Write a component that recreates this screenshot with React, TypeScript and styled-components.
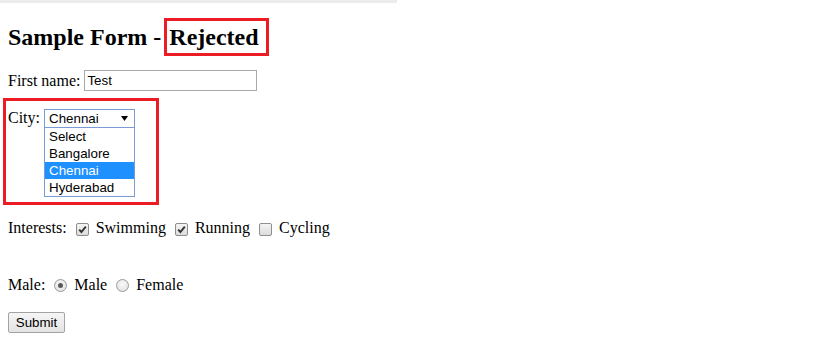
import React from "react";
import styled, { createGlobalStyle } from "styled-components";

const Global = createGlobalStyle`
  html, body { margin: 0; padding: 0; background: #ffffff; }
  body { font-family: "Liberation Serif", "Times New Roman", serif; font-size: 16px; color: #000; }
`;

const TopBar = styled.div`
  width: 397px;
  height: 3px;
  background: #ececec;
`;

const Page = styled.div`
  padding: 0 8px;
`;

const Heading = styled.h2`
  margin: 20px 0 0 0;
  font-size: 24px;
  font-weight: bold;
  line-height: 28px;
`;

const Marked = styled.span`
  border: 3px solid #ec1c24;
  padding: 3px 7px 3px 2px;
  margin-left: -3px;
`;

const Row = styled.div<{ $top: number }>`
  display: flex;
  align-items: center;
  margin-top: ${(p) => p.$top}px;
  line-height: 18px;
  white-space: pre;
`;

const TextInput = styled.div`
  box-sizing: border-box;
  width: 173px;
  height: 21px;
  margin-left: 4px;
  border: 1px solid #a9a9a9;
  padding: 0 2px;
  font-family: "Liberation Sans", Arial, sans-serif;
  font-size: 13.33px;
  line-height: 19px;
`;

const CityBox = styled.div`
  box-sizing: border-box;
  width: 156px;
  height: 107px;
  margin: 7px 0 0 -5px;
  border: 3px solid #ec1c24;
  padding: 8px 0 0 2px;
  display: flex;
  align-items: flex-start;
  gap: 4px;
  line-height: 18px;
`;

const SelectWrap = styled.div`
  display: flex;
  flex-direction: column;
  width: 91px;
  font-family: "Liberation Sans", Arial, sans-serif;
  font-size: 13.33px;
`;

const SelectBox = styled.div`
  box-sizing: border-box;
  height: 19px;
  border: 1px solid #7b9bd5;
  padding: 0 0 0 4px;
  line-height: 17px;
  display: flex;
  align-items: center;
  justify-content: space-between;
`;

const Arrow = styled.svg`
  width: 7px;
  height: 5px;
  margin-right: 6px;
`;

const OptionList = styled.div`
  box-sizing: border-box;
  margin-top: -1px;
  border: 1px solid #7b9bd5;
  display: flex;
  flex-direction: column;
`;

const OptionItem = styled.div<{ $active?: boolean }>`
  height: 17px;
  line-height: 17px;
  padding-left: 4px;
  background: ${(p) => (p.$active ? "#1e90ff" : "#ffffff")};
  color: ${(p) => (p.$active ? "#ffffff" : "#000000")};
`;

const InlineRow = styled.div<{ $top: number }>`
  margin-top: ${(p) => p.$top}px;
  line-height: 18px;
  height: 18px;
`;

const Check = styled.span`
  display: inline-block;
  box-sizing: border-box;
  width: 13px;
  height: 13px;
  margin: 0 3px 0 5px;
  vertical-align: -3px;
  border: 1px solid #8e8e8e;
  border-radius: 2px;
  background: linear-gradient(#f4f4f4, #dcdcdc);
  position: relative;
`;

const CheckMark = styled.svg`
  position: absolute;
  left: 1px;
  top: 1px;
  width: 9px;
  height: 9px;
`;

const Radio = styled.span<{ $on?: boolean }>`
  display: inline-block;
  box-sizing: border-box;
  width: 13px;
  height: 13px;
  margin: 0 3px 0 5px;
  vertical-align: -2px;
  border: 1px solid #9a9a9a;
  border-radius: 50%;
  background: radial-gradient(circle at 50% 40%, #fafafa, #dcdcdc);
  position: relative;
  &::after {
    content: "";
    display: ${(p) => (p.$on ? "block" : "none")};
    position: absolute;
    left: 3px;
    top: 3px;
    width: 5px;
    height: 5px;
    border-radius: 50%;
    background: #5a5a5a;
  }
`;

const SubmitButton = styled.button`
  display: block;
  box-sizing: border-box;
  width: 57px;
  height: 21px;
  margin-top: 18px;
  padding: 0;
  border: 1px solid #a3a3a3;
  border-radius: 2px;
  background: linear-gradient(#f6f6f6, #e3e3e3);
  font-family: "Liberation Sans", Arial, sans-serif;
  font-size: 13.33px;
  color: #000;
`;

const CheckBox = ({ checked }: { checked?: boolean }) => (
  <Check>
    {checked && (
      <CheckMark viewBox="0 0 9 9">
        <path d="M1.2 4.6 L3.4 7 L7.8 1.6" fill="none" stroke="#333" strokeWidth="1.9" />
      </CheckMark>
    )}
  </Check>
);

export default function App() {
  return (
    <>
      <Global />
      <TopBar />
      <Page>
        <Heading>
          Sample Form - <Marked>Rejected</Marked>
        </Heading>
        <Row $top={19}>
          First name:<TextInput>Test</TextInput>
        </Row>
        <CityBox>
          <span>City:</span>
          <SelectWrap>
            <SelectBox>
              Chennai
              <Arrow viewBox="0 0 7 5">
                <polygon points="0,0 7,0 3.5,5" fill="#000" />
              </Arrow>
            </SelectBox>
            <OptionList>
              <OptionItem>Select</OptionItem>
              <OptionItem>Bangalore</OptionItem>
              <OptionItem $active>Chennai</OptionItem>
              <OptionItem>Hyderabad</OptionItem>
            </OptionList>
          </SelectWrap>
        </CityBox>
        <InlineRow $top={14}>
          Interests: <CheckBox checked /> Swimming <CheckBox checked /> Running <CheckBox /> Cycling
        </InlineRow>
        <InlineRow $top={39}>
          Male: <Radio $on /> Male <Radio /> Female
        </InlineRow>
        <SubmitButton>Submit</SubmitButton>
      </Page>
    </>
  );
}
